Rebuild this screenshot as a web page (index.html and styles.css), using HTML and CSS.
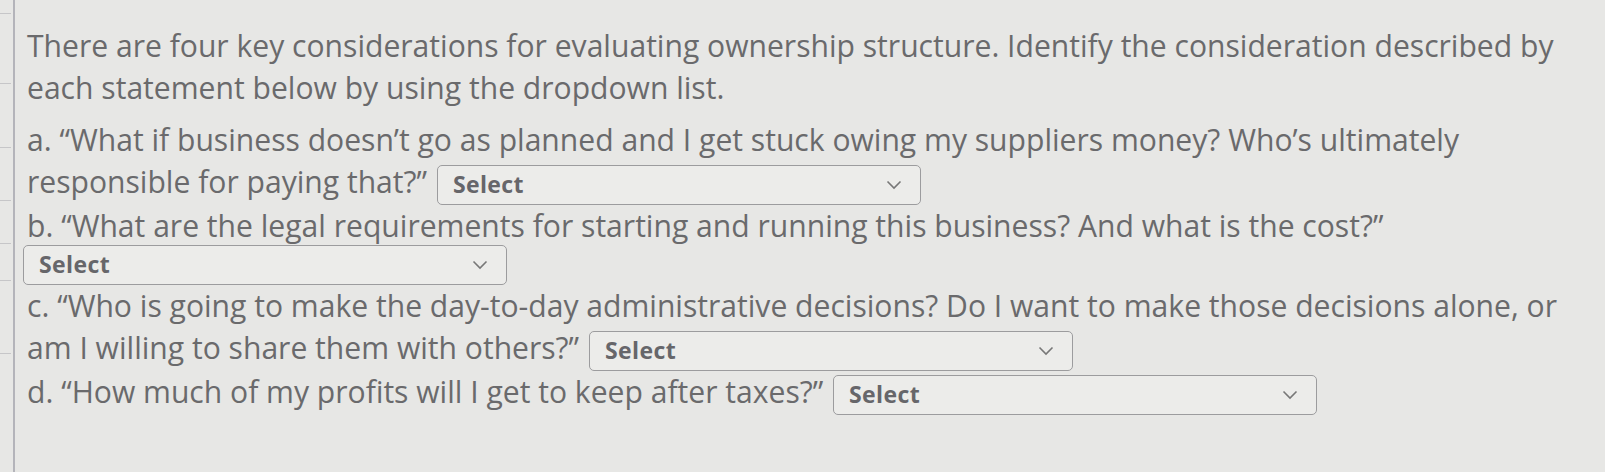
FILE: index.html
```html
<!DOCTYPE html>
<html lang="en">
<head>
<meta charset="utf-8">
<title>Ownership structure</title>
<link rel="stylesheet" href="styles.css">
</head>
<body>
<div class="page">
  <div class="gutter">
    <span class="tick t1"></span>
    <span class="tick t2"></span>
    <span class="tick t3"></span>
    <span class="tick t4"></span>
    <span class="tick t5"></span>
    <span class="tick t6"></span>
    <span class="tick t7"></span>
  </div>
  <div class="content">
    <p class="intro">There are four key considerations for evaluating ownership structure. Identify the consideration described by each statement below by using the dropdown list.</p>
    <p class="item">a. “What if business doesn’t go as planned and I get stuck owing my suppliers money? Who’s ultimately responsible for paying that?” <span class="select"><span class="label">Select</span><svg class="chev" viewBox="0 0 16 10" width="16" height="10"><path d="M1.5 1.5 L8 8 L14.5 1.5" fill="none" stroke="#777" stroke-width="1.6"/></svg></span></p>
    <p class="item">b. “What are the legal requirements for starting and running this business? And what is the cost?” <span class="select select-block"><span class="label">Select</span><svg class="chev" viewBox="0 0 16 10" width="16" height="10"><path d="M1.5 1.5 L8 8 L14.5 1.5" fill="none" stroke="#777" stroke-width="1.6"/></svg></span></p>
    <p class="item">c. “Who is going to make the day-to-day administrative decisions? Do I want to make those decisions alone, or am I willing to share them with others?” <span class="select"><span class="label">Select</span><svg class="chev" viewBox="0 0 16 10" width="16" height="10"><path d="M1.5 1.5 L8 8 L14.5 1.5" fill="none" stroke="#777" stroke-width="1.6"/></svg></span></p>
    <p class="item">d. “How much of my profits will I get to keep after taxes?” <span class="select"><span class="label">Select</span><svg class="chev" viewBox="0 0 16 10" width="16" height="10"><path d="M1.5 1.5 L8 8 L14.5 1.5" fill="none" stroke="#777" stroke-width="1.6"/></svg></span></p>
  </div>
</div>
</body>
</html>
```

FILE: styles.css
```css
html, body {
  margin: 0;
  padding: 0;
  background: #e7e7e5;
}
body {
  font-family: "Open Sans", "Noto Sans", sans-serif;
  color: #6a6a6c;
}
.page {
  display: flex;
  min-height: 472px;
}
.gutter {
  position: relative;
  width: 13px;
  flex: none;
  border-right: 2px solid #b4b4ba;
}
.tick {
  position: absolute;
  left: 0;
  width: 11px;
  height: 1px;
  background: #c6c6c8;
}
.t1 { top: 13px; }
.t2 { top: 83px; }
.t3 { top: 147px; }
.t4 { top: 200px; }
.t5 { top: 243px; }
.t6 { top: 280px; }
.t7 { top: 353px; }
.content {
  flex: 1;
  padding: 25px 20px 0 12px;
  font-size: 30.1px;
  line-height: 42px;
}
.content p {
  margin: 0;
}
.intro {
  margin-bottom: 10px !important;
}
.select {
  display: inline-flex;
  align-items: center;
  justify-content: space-between;
  box-sizing: border-box;
  width: 484px;
  height: 40px;
  padding: 0 18px 0 15px;
  border: 1.5px solid #9c9c9e;
  border-radius: 5px;
  background: #ececea;
  vertical-align: middle;
  line-height: 1;
  margin-left: 2px;
}
.select-block {
  display: flex;
  margin: -2px 0 0 -4px;
}
.label {
  font-size: 23px;
  font-weight: 700;
  letter-spacing: 0.4px;
  color: #66666a;
}
.chev {
  display: block;
}
```
